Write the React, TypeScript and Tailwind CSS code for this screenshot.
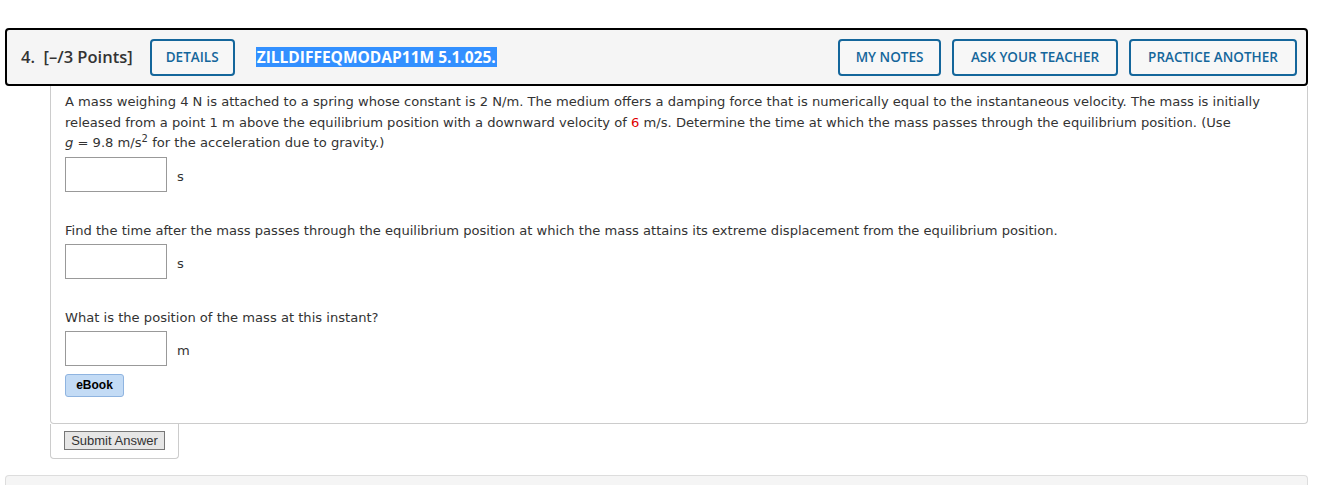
export default function App() {
  const outline =
    "h-[37px] px-[14px] flex items-center rounded-[4px] border-2 border-[#14669b] text-[#14669b] text-[13.5px] font-semibold uppercase bg-[#f7f7f7]";
  const answer = "w-[102px] h-[35px] border border-[#999] bg-white";

  return (
    <div className="min-h-[485px] bg-white pt-[28px] pl-[5px] font-['DejaVu_Sans',Verdana,sans-serif] text-[#333]">
      {/* header */}
      <div className="w-[1303px] h-[58px] rounded-[4px] border-2 border-black bg-[#f5f5f5] flex items-center pl-[14px] pr-[9px] font-['Open_Sans',sans-serif]">
        <span className="text-[16.5px] font-semibold text-[#333] whitespace-pre">4.  [–/3 Points]</span>
        <button className={`${outline} ml-[17px] w-[85px] justify-center`}>Details</button>
        <span className="ml-[21px] bg-[#3390ff] text-white text-[15.5px] font-bold leading-[20px] px-[1px]">
          ZILLDIFFEQMODAP11M 5.1.025.
        </span>
        <div className="ml-auto flex gap-[11px]">
          <button className={`${outline} w-[103px] justify-center`}>My Notes</button>
          <button className={`${outline} w-[166px] justify-center`}>Ask Your Teacher</button>
          <button className={`${outline} w-[168px] justify-center`}>Practice Another</button>
        </div>
      </div>

      {/* question body */}
      <div className="ml-[45px] w-[1258px]">
        <div className="border-x border-b border-[#ccc] rounded-b-[4px] pl-[14px] pr-[20px] pt-[6px] pb-[26px] text-[13.1px] leading-[20px]">
          <p className="leading-[20.5px]">
            A mass weighing 4 N is attached to a spring whose constant is 2 N/m. The medium offers a damping force
            that is numerically equal to the instantaneous velocity. The mass is initially
            <br />
            released from a point 1 m above the equilibrium position with a downward velocity of{" "}
            <span className="text-[#e00000]">6</span> m/s. Determine the time at which the mass passes through the
            equilibrium position. (Use
            <br />
            <i>g</i> = 9.8 m/s<sup className="text-[10px]">2</sup> for the acceleration due to gravity.)
          </p>
          <div className="mt-[3px] flex items-center gap-[10px]">
            <div className={answer} />
            <span className="mt-[6px]">s</span>
          </div>

          <p className="mt-[29px]">
            Find the time after the mass passes through the equilibrium position at which the mass attains its
            extreme displacement from the equilibrium position.
          </p>
          <div className="mt-[3px] flex items-center gap-[10px]">
            <div className={answer} />
            <span className="mt-[6px]">s</span>
          </div>

          <p className="mt-[29px]">What is the position of the mass at this instant?</p>
          <div className="mt-[3px] flex items-center gap-[10px]">
            <div className={answer} />
            <span className="mt-[6px]">m</span>
          </div>

          <button className="mt-[8px] w-[59px] h-[23px] rounded-[3px] border border-[#8fb4e0] bg-[#c3dbf5] font-['Liberation_Sans',Arial,sans-serif] text-[12px] font-bold text-black leading-none">
            eBook
          </button>
        </div>
        <div className="w-[129px] h-[35px] border-x border-b border-[#ccc] rounded-b-[4px] flex items-center pl-[13px]">
          <button className="w-[101px] h-[19px] border border-[#777] bg-[#e6e6e6] font-['Liberation_Sans',Arial,sans-serif] text-[13px] text-[#333] leading-none">
            Submit Answer
          </button>
        </div>
      </div>

      {/* next question (cut off) */}
      <div className="mt-[16px] w-[1303px] h-[20px] rounded-t-[4px] border border-b-0 border-[#ddd] bg-[#f5f5f5]" />
    </div>
  );
}
